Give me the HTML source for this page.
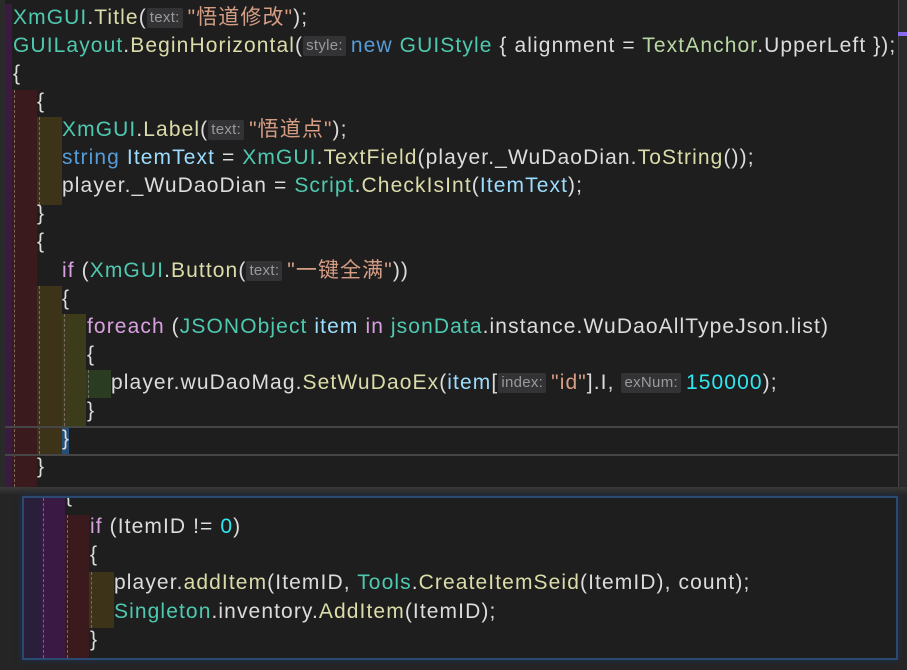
<!DOCTYPE html>
<html><head><meta charset="utf-8"><style>
body{margin:0;width:907px;height:670px;background:#1e1e1e;overflow:hidden;position:relative;font-family:"Liberation Sans","Noto Sans CJK SC",sans-serif;font-size:21px;color:#dcdcdc}
.b{position:absolute}
.l{position:absolute;white-space:pre;line-height:28px;height:28px;letter-spacing:1.1px}
.c{color:#4ec9b0}.m{color:#dcdcaa}.s{color:#d69d85}.k{color:#569cd6}.p{color:#d8a0df}.v{color:#9cdcfe}.n{color:#2ee8f0}.e{color:#b8d7a3}
.h{display:inline-block;background:#333336;color:#9a9a9a;font-size:15px;line-height:20px;padding:0 3px;border-radius:2px;vertical-align:2px;margin-right:5px;letter-spacing:0.3px}
.d{position:absolute;border-left:1px dashed #7a6a60;width:0}
</style></head><body>
<div class="b" style="left:0;top:0;width:898px;height:487px;background:#1e1e1e"></div>
<div class="b" style="left:898px;top:0;width:9px;height:487px;background:#2a2a2a;border-left:1px solid #444;z-index:5"></div>
<div class="b" style="left:898px;top:32px;width:9px;height:4px;background:#8a6af0;z-index:6"></div>
<div class="b" style="left:0;top:32px;width:5px;height:4px;background:#8a6af0"></div>
<div class="b" style="left:0;top:0;width:5px;height:487px;background:#2a2a2a"></div>
<div class="b" style="left:5px;top:4px;width:7px;height:483px;background:#3a1a3e"></div>
<div class="b" style="left:12px;top:90px;width:25px;height:397px;background:#3a1a1c"></div>
<div class="b" style="left:37px;top:117px;width:25px;height:88px;background:#3d3319"></div>
<div class="b" style="left:37px;top:286px;width:25px;height:168px;background:#3d3319"></div>
<div class="b" style="left:62px;top:314px;width:24px;height:112px;background:#3d3c1a"></div>
<div class="b" style="left:86px;top:370px;width:25px;height:28px;background:#2a3d22"></div>
<div class="d" style="left:14px;top:90px;height:397px"></div>
<div class="d" style="left:39px;top:117px;height:88px"></div>
<div class="d" style="left:39px;top:286px;height:168px"></div>
<div class="d" style="left:64px;top:314px;height:112px"></div>
<div class="d" style="left:88px;top:370px;height:28px"></div>
<div class="b" style="left:5px;top:426px;width:893px;height:26px;border-top:2px solid #464646;border-bottom:2px solid #464646"></div>
<div class="b" style="left:62px;top:428px;width:7px;height:26px;background:#264f78"></div>

<div class="l" style="left:13px;top:4px"><span class="c">XmGUI</span>.<span class="m">Title</span>(<span class="h">text:</span><span class="s">"悟道修改"</span>);</div>
<div class="l" style="left:13px;top:32px"><span class="c">GUILayout</span>.<span class="m">BeginHorizontal</span>(<span class="h">style:</span><span class="k">new</span> <span class="c">GUIStyle</span> { alignment = <span class="e">TextAnchor</span>.UpperLeft });</div>
<div class="l" style="left:13px;top:60px">{</div>
<div class="l" style="left:37px;top:88px">{</div>
<div class="l" style="left:62px;top:116px"><span class="c">XmGUI</span>.<span class="m">Label</span>(<span class="h">text:</span><span class="s">"悟道点"</span>);</div>
<div class="l" style="left:62px;top:144px"><span class="k">string</span> <span class="v">ItemText</span> = <span class="c">XmGUI</span>.<span class="m">TextField</span>(player._WuDaoDian.<span class="m">ToString</span>());</div>
<div class="l" style="left:62px;top:172px">player._WuDaoDian = <span class="c">Script</span>.<span class="m">CheckIsInt</span>(<span class="v">ItemText</span>);</div>
<div class="l" style="left:37px;top:200px">}</div>
<div class="l" style="left:37px;top:228px">{</div>
<div class="l" style="left:62px;top:257px"><span class="p">if</span> (<span class="c">XmGUI</span>.<span class="m">Button</span>(<span class="h">text:</span><span class="s">"一键全满"</span>))</div>
<div class="l" style="left:62px;top:285px">{</div>
<div class="l" style="left:87px;top:313px"><span class="p">foreach</span> (<span class="c">JSONObject</span> <span class="v">item</span> <span class="p">in</span> <span class="c">jsonData</span>.instance.WuDaoAllTypeJson.list)</div>
<div class="l" style="left:87px;top:341px">{</div>
<div class="l" style="left:111px;top:369px">player.wuDaoMag.<span class="m">SetWuDaoEx</span>(<span class="v">item</span>[<span class="h">index:</span><span class="s">"id"</span>].I, <span class="h">exNum:</span><span class="n">150000</span>);</div>
<div class="l" style="left:87px;top:397px">}</div>
<div class="l" style="left:62px;top:425px">}</div>
<div class="l" style="left:37px;top:453px">}</div>

<div class="b" style="left:0;top:487px;width:907px;height:183px;background:#252526;z-index:7"></div>
<div class="b" style="left:0;top:487px;width:907px;height:8px;background:linear-gradient(#3a3a3a,#252526);z-index:7"></div>

<div style="position:absolute;left:0;top:0;width:907px;height:670px;z-index:8">
<div class="b" style="left:22px;top:496px;width:876px;height:164px;background:#1e1e1e;border:2px solid #2a4a72;box-sizing:border-box;box-shadow:0 0 6px #1b3350"></div>
<div class="b" style="left:24px;top:498px;width:17px;height:160px;background:#2a1f3a"></div>
<div class="b" style="left:41px;top:498px;width:24px;height:160px;background:#3a1a45"></div>
<div class="b" style="left:65px;top:515px;width:24px;height:143px;background:#3a1a1c"></div>
<div class="b" style="left:89px;top:572px;width:25px;height:56px;background:#3d3319"></div>
<div class="d" style="left:43px;top:498px;height:160px"></div>
<div class="d" style="left:67px;top:515px;height:143px"></div>
<div class="d" style="left:91px;top:572px;height:56px"></div>
<div class="b" style="left:65px;top:498px;width:20px;height:12px;overflow:hidden"><div class="l" style="left:0;top:-16px">{</div></div>
<div class="l" style="left:90px;top:513px"><span class="p">if</span> (ItemID != <span class="n">0</span>)</div>
<div class="l" style="left:90px;top:541px">{</div>
<div class="l" style="left:114px;top:569px">player.<span class="m">addItem</span>(ItemID, <span class="c">Tools</span>.<span class="m">CreateItemSeid</span>(ItemID), count);</div>
<div class="l" style="left:114px;top:598px"><span class="c">Singleton</span>.inventory.<span class="m">AddItem</span>(ItemID);</div>
<div class="l" style="left:90px;top:626px">}</div>
</div>
</body></html>
